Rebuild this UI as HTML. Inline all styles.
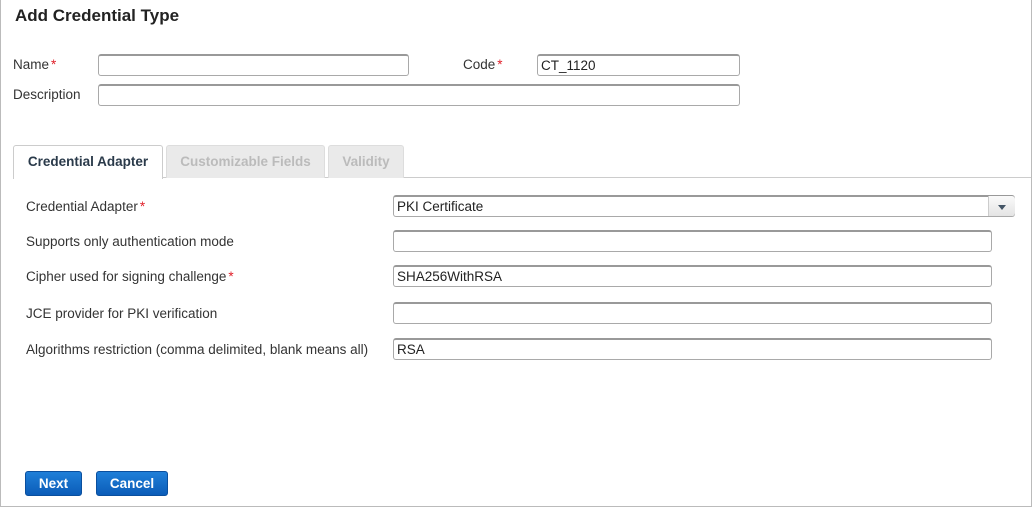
<!DOCTYPE html>
<html><head><style>
body{margin:0;width:1032px;height:508px;background:#fff;font-family:"Liberation Sans",Arial,sans-serif;font-size:13.5px;color:#333;position:relative;overflow:hidden}
.frame{position:absolute;left:0;top:0;width:1030px;height:506px;border:1px solid #bbb;border-top:none}
.a{position:absolute}
.in{position:absolute;box-sizing:border-box;border:1px solid #a9a9a9;border-top:2px solid #999;border-radius:3px;height:22px;background:#fff;font-size:13.5px;padding:1px 3px;color:#222;line-height:17px}
.req{color:#e0202a;margin-left:2px}
.tab{position:absolute;top:145px;height:33px;box-sizing:border-box;border:1px solid #ddd;border-bottom:none;border-radius:3px 3px 0 0;background:#eaeaea;color:#bbb;font-weight:bold;text-align:center;line-height:31px;font-size:13.5px}
.btn{position:absolute;top:471px;height:25px;box-sizing:border-box;border:1px solid #0a4f9e;border-radius:3px;background:linear-gradient(#1f7fd8,#0b5cb8);color:#fff;font-weight:bold;text-align:center;line-height:23px;font-size:13.5px}
</style></head><body>
<div class="frame"></div>
<div class="a" style="left:15px;top:6px;font-size:17px;font-weight:bold;color:#222">Add Credential Type</div>
<div class="a" style="left:13px;top:57px">Name<span class="req">*</span></div>
<div class="in" style="left:98px;top:54px;width:311px"></div>
<div class="a" style="left:463px;top:57px">Code<span class="req">*</span></div>
<div class="in" style="left:537px;top:54px;width:203px">CT_1120</div>
<div class="a" style="left:13px;top:87px">Description</div>
<div class="in" style="left:98px;top:84px;width:642px"></div>
<div class="a" style="left:13px;top:177px;width:1018px;height:1px;background:#ccc"></div>
<div class="tab" style="left:13px;width:150px;background:#fff;color:#2a3a4a;border-color:#ccc;height:34px">Credential Adapter</div>
<div class="tab" style="left:166px;width:159px">Customizable Fields</div>
<div class="tab" style="left:328px;width:76px">Validity</div>
<div class="a" style="left:26px;top:199px">Credential Adapter<span class="req">*</span></div>
<div class="in" style="left:393px;top:195px;width:622px">PKI Certificate</div>
<div class="a" style="left:988px;top:196px;width:26px;height:20px;border-left:1px solid #ccc;background:linear-gradient(#fafafa,#e4e4e4);border-radius:0 3px 3px 0"><div style="position:absolute;left:9px;top:9px;border-left:4px solid transparent;border-right:4px solid transparent;border-top:5px solid #456"></div></div>
<div class="a" style="left:26px;top:234px">Supports only authentication mode</div>
<div class="in" style="left:393px;top:230px;width:599px"></div>
<div class="a" style="left:26px;top:269px">Cipher used for signing challenge<span class="req">*</span></div>
<div class="in" style="left:393px;top:265px;width:599px">SHA256WithRSA</div>
<div class="a" style="left:26px;top:306px">JCE provider for PKI verification</div>
<div class="in" style="left:393px;top:302px;width:599px"></div>
<div class="a" style="left:26px;top:342px">Algorithms restriction (comma delimited, blank means all)</div>
<div class="in" style="left:393px;top:338px;width:599px">RSA</div>
<div class="btn" style="left:25px;width:57px">Next</div>
<div class="btn" style="left:96px;width:72px">Cancel</div>
</body></html>
